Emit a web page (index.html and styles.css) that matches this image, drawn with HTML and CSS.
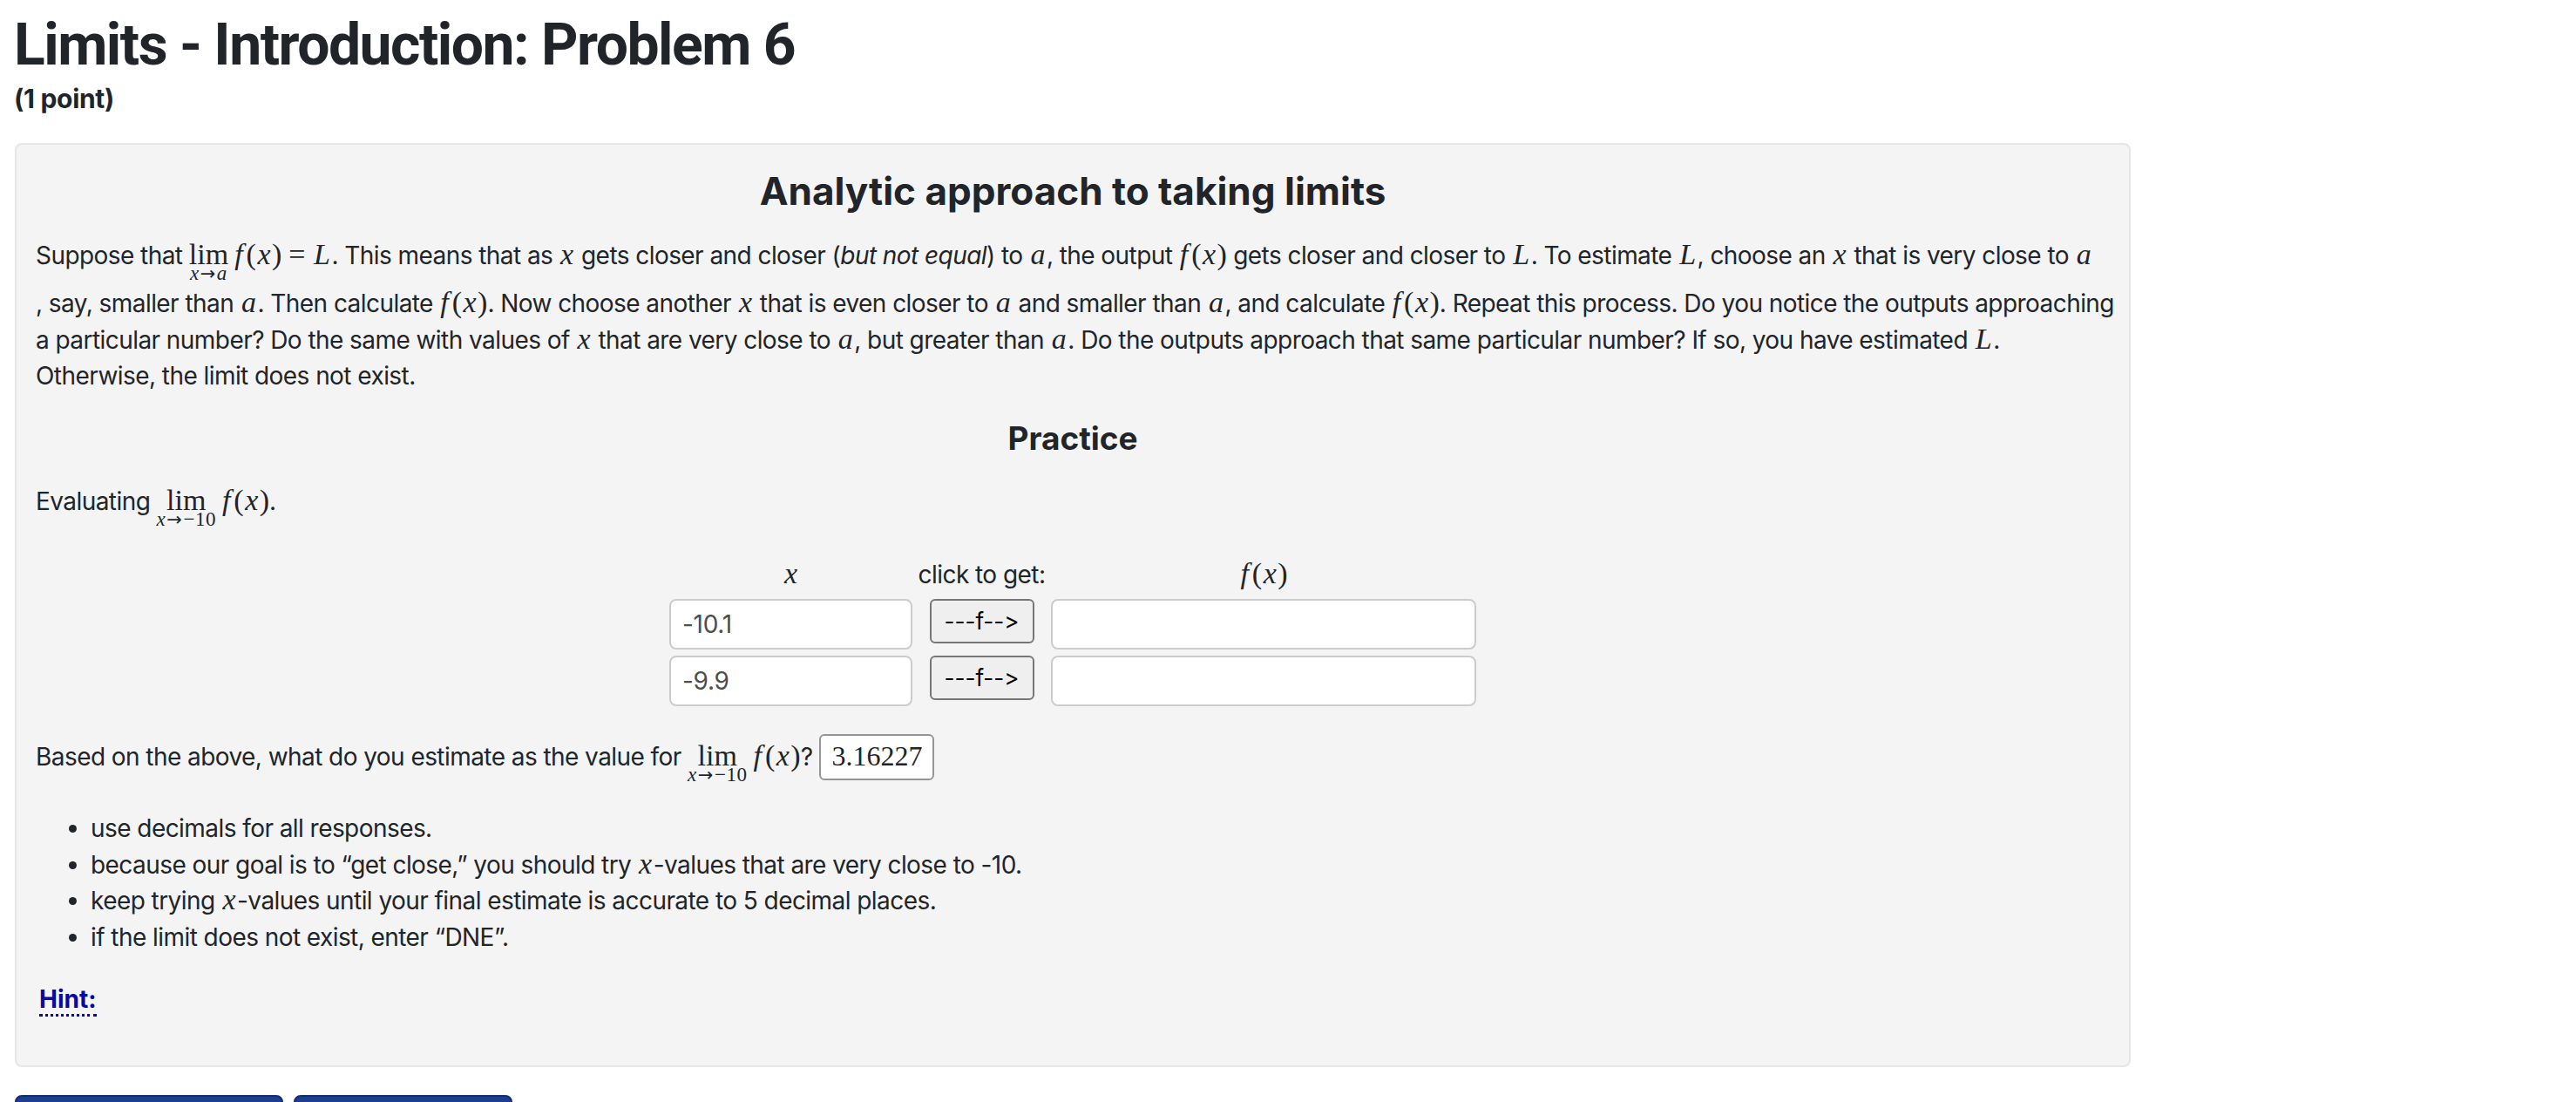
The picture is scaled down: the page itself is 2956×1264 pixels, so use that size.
FILE: index.html
```html
<!DOCTYPE html>
<html lang="en">
<head>
<meta charset="utf-8">
<title>Limits - Introduction: Problem 6</title>
<link rel="stylesheet" href="styles.css">
</head>
<body>
<main class="page">
  <h1 class="title">Limits - Introduction: Problem 6</h1>
  <div class="points">(1 point)</div>

  <section class="problem">
    <h2 class="heading">Analytic approach to taking limits</h2>

    <p class="intro">Suppose that <span class="lim"><span class="lim-op">lim</span><span class="lim-sub"><i>x</i><span class="arr">→</span><i>a</i></span></span><span class="m"><i class="f">f</i>(<i>x</i>)<span class="rel">=</span><i>L</i></span>. This means that as <span class="m"><i>x</i></span> gets closer and closer (<em>but not equal</em>) to <span class="m"><i>a</i></span>, the output <span class="m"><i class="f">f</i>(<i>x</i>)</span> gets closer and closer to <span class="m"><i>L</i></span>. To estimate <span class="m"><i>L</i></span>, choose an <span class="m"><i>x</i></span> that is very close to <span class="m"><i>a</i></span><br>, say, smaller than <span class="m"><i>a</i></span>. Then calculate <span class="m"><i class="f">f</i>(<i>x</i>)</span>. Now choose another <span class="m"><i>x</i></span> that is even closer to <span class="m"><i>a</i></span> and smaller than <span class="m"><i>a</i></span>, and calculate <span class="m"><i class="f">f</i>(<i>x</i>)</span>. Repeat this process. Do you notice the outputs approaching<br>a particular number? Do the same with values of <span class="m"><i>x</i></span> that are very close to <span class="m"><i>a</i></span>, but greater than <span class="m"><i>a</i></span>. Do the outputs approach that same particular number? If so, you have estimated <span class="m"><i>L</i></span>.<br>Otherwise, the limit does not exist.</p>

    <h3 class="practice-title">Practice</h3>

    <p class="evaluating">Evaluating <span class="lim"><span class="lim-op">lim</span><span class="lim-sub"><i>x</i><span class="arr">→</span>−10</span></span><span class="m"><i class="f">f</i>(<i>x</i>)</span>.</p>

    <div class="practice-grid">
      <div class="col-head"><span class="m"><i>x</i></span></div>
      <div class="col-head">click to get:</div>
      <div class="col-head"><span class="m"><i class="f">f</i>(<i>x</i>)</span></div>

      <input class="field x-input" type="text" value="-10.1">
      <button class="f-btn" type="button">---f--&gt;</button>
      <input class="field fx-input" type="text" value="">

      <input class="field x-input" type="text" value="-9.9">
      <button class="f-btn" type="button">---f--&gt;</button>
      <input class="field fx-input" type="text" value="">
    </div>

    <p class="answer-line">Based on the above, what do you estimate as the value for <span class="lim"><span class="lim-op">lim</span><span class="lim-sub"><i>x</i><span class="arr">→</span>−10</span></span><span class="m"><i class="f">f</i>(<i>x</i>)</span>?<span class="answer">3.16227</span></p>

    <ul class="notes">
      <li>use decimals for all responses.</li>
      <li>because our goal is to “get close,” you should try <span class="m"><i>x</i></span>-values that are very close to -10.</li>
      <li>keep trying <span class="m"><i>x</i></span>-values until your final estimate is accurate to 5 decimal places.</li>
      <li>if the limit does not exist, enter “DNE”.</li>
    </ul>

    <div class="hint"><a class="hint-link" href="#">Hint:</a></div>
  </section>

  <div class="actions">
    <button class="btn btn-preview" type="button" aria-label="Preview My Answers"></button>
    <button class="btn btn-submit" type="button" aria-label="Submit Answers"></button>
  </div>
</main>
</body>
</html>
```

FILE: styles.css
```css
* {
  box-sizing: border-box;
  font-variant-ligatures: none;
  font-feature-settings: "calt" 0, "liga" 0;
}

html,
body {
  margin: 0;
  background: #ffffff;
}

body {
  font-family: Inter, "Noto Sans", "Liberation Sans", sans-serif;
  color: #212529;
  font-size: 28px;
  line-height: 41.5px;
  letter-spacing: -0.56px;
}

.page {
  padding: 14px 0 0 16px;
}

.title {
  margin: 0;
  font-family: Roboto, Inter, "Liberation Sans", sans-serif;
  font-size: 66px;
  line-height: 76px;
  font-weight: 700;
  letter-spacing: -1.5px;
}

.points {
  margin-top: 2px;
  font-size: 30px;
  line-height: 42px;
  font-weight: 700;
  letter-spacing: -0.3px;
}

.problem {
  width: 2428px;
  margin: 30px 0 0 1px;
  padding: 27px 22px 54px 22px;
  background: #f4f4f4;
  border: 2px solid #e6e6e6;
  border-radius: 8px;
}

.heading {
  margin: 0;
  text-align: center;
  font-size: 44px;
  line-height: 52px;
  font-weight: 700;
  letter-spacing: 0;
}

.intro {
  margin: 28px 0 0;
  white-space: nowrap;
}

/* math */
.m {
  font-family: "Liberation Serif", "DejaVu Serif", serif;
  font-size: 34px;
  line-height: 1;
  letter-spacing: 0;
}

.m i,
.lim-sub i {
  font-style: italic;
}

.m i {
  padding: 0 1.5px;
}

.m i.f {
  padding: 0 4px 0 1px;
}

.rel {
  margin: 0 8px;
}

.lim {
  display: inline-flex;
  flex-direction: column;
  align-items: center;
  vertical-align: baseline;
  font-family: "Liberation Serif", "DejaVu Serif", serif;
  letter-spacing: 0;
  margin: 0 6px 0 0;
  padding-bottom: 8px;
}

.lim-op {
  font-size: 34px;
  line-height: 33px;
}

.lim-sub {
  font-size: 23px;
  line-height: 12px;
  white-space: nowrap;
  letter-spacing: 0.5px;
}

.arr {
  font-family: "DejaVu Sans", sans-serif;
  font-size: 21px;
  margin: 0 1px;
}

.practice-title {
  margin: 28px 0 0;
  text-align: center;
  font-size: 37px;
  line-height: 44px;
  font-weight: 700;
  letter-spacing: 0;
}

.evaluating {
  margin: 30px 0 0;
}

.practice-grid {
  margin-top: 29px;
  display: grid;
  grid-template-columns: 279px 120px 488px;
  column-gap: 19.5px;
  row-gap: 7px;
  justify-content: center;
  align-items: start;
}

.col-head {
  justify-self: center;
  text-align: center;
  line-height: 41.5px;
  white-space: nowrap;
}

.field {
  width: 100%;
  height: 58px;
  margin: 0;
  padding: 0 13px;
  background: #ffffff;
  border: 2px solid #cccccc;
  border-radius: 8px;
  font-family: Inter, "Noto Sans", sans-serif;
  font-size: 28px;
  letter-spacing: -0.3px;
  color: #4d4d4d;
}

.f-btn {
  width: 120px;
  height: 51px;
  margin: 0;
  padding: 0;
  background: #efefef;
  border: 2px solid #767676;
  border-radius: 6px;
  font-family: Inter, "Noto Sans", sans-serif;
  font-size: 26px;
  letter-spacing: 0;
  color: #000000;
}

.answer-line {
  margin: 32px 0 0;
}

.answer {
  display: inline-block;
  margin-left: 8px;
  padding: 0 12px 2px;
  background: #ffffff;
  border: 2px solid #959595;
  border-radius: 6px;
  font-family: "Liberation Serif", "DejaVu Serif", serif;
  font-size: 32px;
  line-height: 47px;
  letter-spacing: 0;
}

.notes {
  margin: 27px 0 0;
  padding-left: 63px;
}

.notes li {
  line-height: 41.5px;
}

.hint {
  margin-top: 30px;
  padding-left: 4px;
}

.hint-link {
  color: #0a0aa0;
  font-weight: 700;
  letter-spacing: 0;
  text-decoration: none;
  border-bottom: 3px dotted #0a0aa0;
}

.actions {
  display: flex;
  gap: 12px;
  margin: 32px 0 0 1px;
}

.btn {
  height: 64px;
  padding: 0;
  background: #1d3e8f;
  border: 2px solid #112d6c;
  border-radius: 8px;
}

.btn-preview {
  width: 308px;
}

.btn-submit {
  width: 251px;
}
```
